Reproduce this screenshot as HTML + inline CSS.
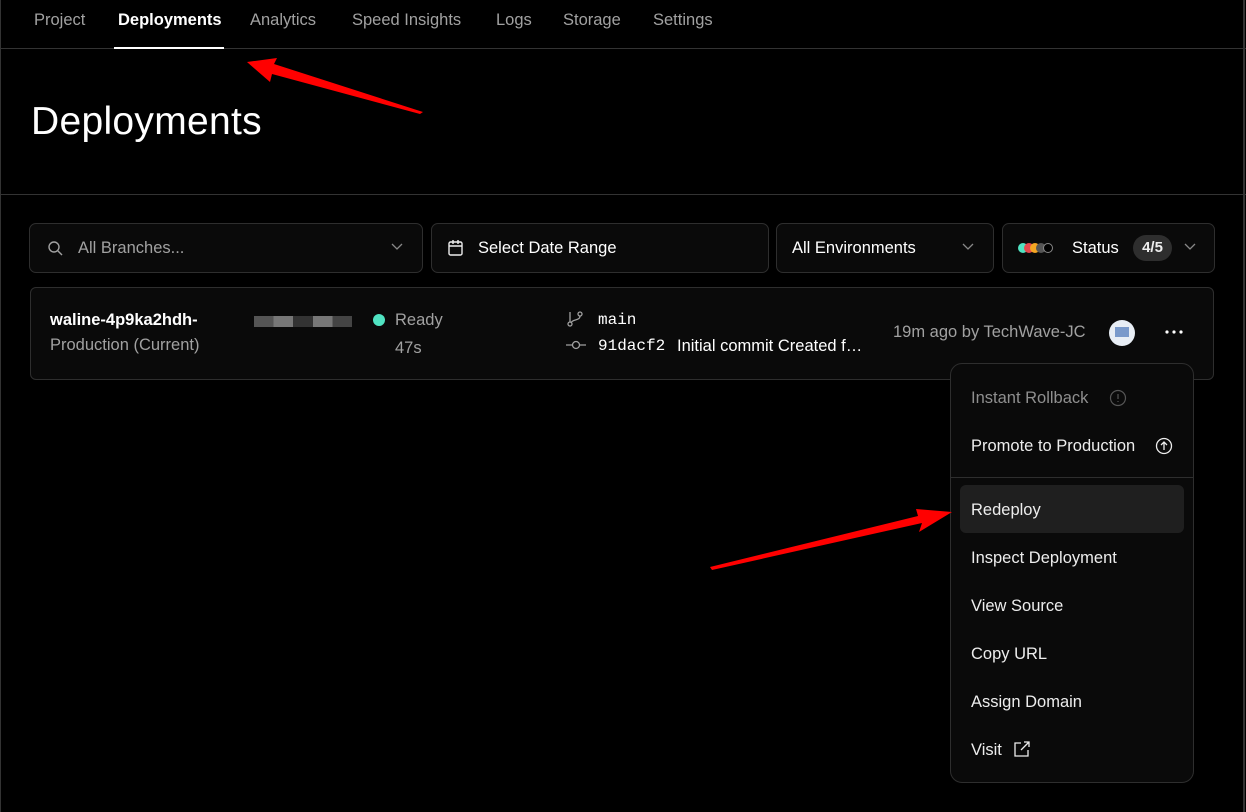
<!DOCTYPE html>
<html><head><style>
*{margin:0;padding:0;box-sizing:border-box}
body{width:1246px;height:812px;background:#000;color:#ededed;font-family:"Liberation Sans",sans-serif;position:relative;overflow:hidden}
.a{position:absolute;white-space:nowrap}
.nav{font-size:16.5px;color:#a1a1a1;top:11px}
.box{position:absolute;top:223px;height:50px;border:1px solid #2e2e2e;border-radius:7px;background:#0a0a0a}
.chev{position:absolute;top:18px}
.mi{position:absolute;left:971px;font-size:16.5px;color:#ededed}
</style></head><body>
<div class="a" style="left:0;top:0;width:1px;height:812px;background:#333"></div>
<div class="a" style="left:1243px;top:0;width:2px;height:812px;background:#333"></div>
<div class="a nav" style="left:34px">Project</div>
<div class="a nav" style="left:118px;color:#fff;font-weight:bold">Deployments</div>
<div class="a nav" style="left:250px">Analytics</div>
<div class="a nav" style="left:352px">Speed Insights</div>
<div class="a nav" style="left:496px">Logs</div>
<div class="a nav" style="left:563px">Storage</div>
<div class="a nav" style="left:653px">Settings</div>
<div class="a" style="left:0;top:48px;width:1246px;height:1px;background:#333"></div>
<div class="a" style="left:114px;top:47px;width:110px;height:2px;background:#fff"></div>
<div class="a" style="left:31px;top:100px;font-size:39px;color:#fff;letter-spacing:0.3px">Deployments</div>
<div class="a" style="left:0;top:194px;width:1246px;height:1px;background:#333"></div>

<div class="box" style="left:29px;width:394px">
<svg class="a" style="left:17px;top:16px" width="16" height="16" viewBox="0 0 16 16" fill="none" stroke="#a1a1a1" stroke-width="1.4"><circle cx="7" cy="7" r="5"/><path d="M11 11l4 4"/></svg>
<div class="a" style="left:48px;top:15px;font-size:16.5px;color:#a1a1a1">All Branches...</div>
<svg class="chev" style="left:360px" width="14" height="10" viewBox="0 0 14 10" fill="none" stroke="#888" stroke-width="1.3"><path d="M2 2l5 5 5-5"/></svg>
</div>
<div class="box" style="left:431px;width:338px">
<svg class="a" style="left:15px;top:15px" width="18" height="18" viewBox="0 0 18 18" fill="none" stroke="#ededed" stroke-width="1.4"><rect x="2" y="3" width="13" height="13" rx="1.5"/><path d="M2 7h13M6 1v4M11 1v4"/></svg>
<div class="a" style="left:46px;top:15px;font-size:16.5px;color:#fff">Select Date Range</div>
</div>
<div class="box" style="left:776px;width:218px">
<div class="a" style="left:15px;top:15px;font-size:16.5px;color:#fff">All Environments</div>
<svg class="chev" style="left:184px" width="14" height="10" viewBox="0 0 14 10" fill="none" stroke="#888" stroke-width="1.3"><path d="M2 2l5 5 5-5"/></svg>
</div>
<div class="box" style="left:1002px;width:213px">
<svg class="a" style="left:14px;top:18px" width="42" height="12"><circle cx="6" cy="6" r="5" fill="#50e3c2"/><circle cx="12" cy="6" r="5" fill="#e5484d"/><circle cx="18" cy="6" r="5" fill="#f5a623"/><circle cx="24" cy="6" r="5" fill="#555"/><circle cx="31" cy="6" r="4.5" fill="#000" stroke="#888"/></svg>
<div class="a" style="left:69px;top:15px;font-size:16.5px;color:#fff">Status</div>
<div class="a" style="left:130px;top:11px;width:39px;height:26px;border-radius:13px;background:#2e2e2e;font-size:15px;font-weight:bold;text-align:center;line-height:26px;color:#ededed">4/5</div>
<svg class="chev" style="left:180px" width="14" height="10" viewBox="0 0 14 10" fill="none" stroke="#888" stroke-width="1.3"><path d="M2 2l5 5 5-5"/></svg>
</div>

<div class="a" style="left:30px;top:287px;width:1184px;height:93px;border:1px solid #2e2e2e;border-radius:6px;background:#0a0a0a"></div>
<div class="a" style="left:50px;top:311px;font-size:16.5px;font-weight:bold;color:#fff">waline-4p9ka2hdh-</div>
<div class="a" style="left:254px;top:316px;width:98px;height:11px;background:linear-gradient(90deg,#555 0 20%,#777 20% 40%,#333 40% 60%,#777 60% 80%,#444 80%)"></div>
<div class="a" style="left:50px;top:336px;font-size:16.5px;color:#a1a1a1">Production (Current)</div>
<div class="a" style="left:373px;top:314px;width:12px;height:12px;border-radius:50%;background:#50e3c2"></div>
<div class="a" style="left:395px;top:311px;font-size:16.5px;color:#a1a1a1">Ready</div>
<div class="a" style="left:395px;top:339px;font-size:16.5px;color:#a1a1a1">47s</div>
<svg class="a" style="left:566px;top:310px" width="18" height="18" viewBox="0 0 18 18" fill="none" stroke="#a1a1a1" stroke-width="1.3"><circle cx="4" cy="14" r="2"/><circle cx="14" cy="4" r="2"/><path d="M4 2v10M14 6c0 5-8 3-9 7"/></svg>
<div class="a" style="left:598px;top:311px;font-size:16px;font-family:'Liberation Mono',monospace;color:#fff">main</div>
<svg class="a" style="left:566px;top:338px" width="20" height="14" viewBox="0 0 20 14" fill="none" stroke="#a1a1a1" stroke-width="1.3"><circle cx="10" cy="7" r="3.5"/><path d="M0 7h6M14 7h6"/></svg>
<div class="a" style="left:598px;top:337px;font-size:16px;font-family:'Liberation Mono',monospace;color:#fff">91dacf2</div>
<div class="a" style="left:677px;top:337px;font-size:16.5px;color:#fff">Initial commit Created f…</div>
<div class="a" style="left:893px;top:323px;font-size:16.5px;color:#a1a1a1">19m ago by TechWave-JC</div>
<div class="a" style="left:1109px;top:320px;width:26px;height:26px;border-radius:50%;background:#e8eef5;overflow:hidden"><div class="a" style="left:6px;top:7px;width:14px;height:10px;background:#7a9acb"></div></div>
<svg class="a" style="left:1164px;top:329px" width="20" height="6"><circle cx="3" cy="3" r="1.6" fill="#fff"/><circle cx="10" cy="3" r="1.6" fill="#fff"/><circle cx="17" cy="3" r="1.6" fill="#fff"/></svg>

<div class="a" style="left:950px;top:363px;width:244px;height:420px;border:1px solid #2e2e2e;border-radius:12px;background:#0a0a0a"></div>
<div class="a" style="left:951px;top:477px;width:242px;height:1px;background:#2e2e2e"></div>
<div class="a" style="left:960px;top:485px;width:224px;height:48px;border-radius:6px;background:#1f1f1f"></div>
<div class="mi" style="top:389px;color:#8f8f8f">Instant Rollback</div>
<svg class="a" style="left:1109px;top:389px" width="18" height="18" viewBox="0 0 18 18" fill="none" stroke="#555" stroke-width="1.2"><circle cx="9" cy="9" r="7.5"/><path d="M9 5v5M9 12v1"/></svg>
<div class="mi" style="top:437px">Promote to Production</div>
<svg class="a" style="left:1155px;top:437px" width="18" height="18" viewBox="0 0 18 18" fill="none" stroke="#ededed" stroke-width="1.3"><circle cx="9" cy="9" r="7.5"/><path d="M9 13V5M6 8l3-3 3 3"/></svg>
<div class="mi" style="top:501px">Redeploy</div>
<div class="mi" style="top:549px">Inspect Deployment</div>
<div class="mi" style="top:597px">View Source</div>
<div class="mi" style="top:645px">Copy URL</div>
<div class="mi" style="top:693px">Assign Domain</div>
<div class="mi" style="top:741px">Visit</div>
<svg class="a" style="left:1013px;top:740px" width="18" height="18" viewBox="0 0 18 18" fill="none" stroke="#ededed" stroke-width="1.3"><path d="M8 3H2v13h13v-6M11 2h5v5M16 2l-8 8"/></svg>

<svg class="a" style="left:0;top:0" width="1246" height="812">
<polygon points="423,112 274,64 277,58 247,62 270,82 272,74 420,114" fill="#f00"/>
<polygon points="712,570 922,523 919,532 952,512 916,509 918,516 710,567" fill="#f00"/>
</svg>
</body></html>
